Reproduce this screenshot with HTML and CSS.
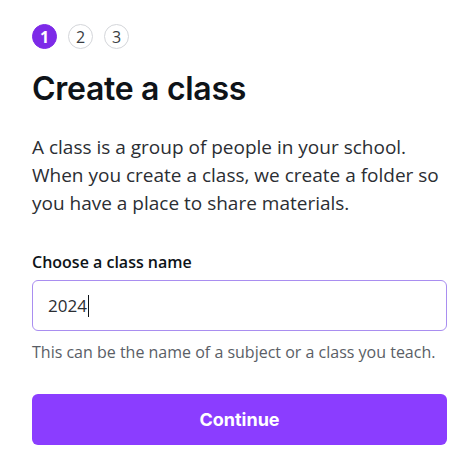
FILE: index.html
```html
<!DOCTYPE html>
<html lang="en">
<head>
<meta charset="utf-8">
<title>Create a class</title>
<link rel="stylesheet" href="styles.css">
</head>
<body>
<main class="panel">
  <ol class="steps">
    <li class="step step-active">1</li>
    <li class="step">2</li>
    <li class="step">3</li>
  </ol>
  <h1 class="title">Create a class</h1>
  <p class="intro">A class is a group of people in your school. When you create a class, we create a folder so you have a place to share materials.</p>
  <label class="field-label" for="classname">Choose a class name</label>
  <div class="input-box"><span class="input-value">2024</span><span class="caret"></span></div>
  <p class="hint">This can be the name of a subject or a class you teach.</p>
  <button class="continue" type="button">Continue</button>
</main>
</body>
</html>
```
FILE: styles.css
```css
* { box-sizing: border-box; }
html, body { margin: 0; background: #ffffff; }
body {
  font-family: "Open Sans", "Noto Sans", sans-serif;
  color: #0e1318;
}
.panel {
  padding: 24px 27px 0 32px;
  display: flex;
  flex-direction: column;
}
.steps {
  list-style: none;
  margin: 0;
  padding: 0;
  display: flex;
  gap: 11px;
}
.step {
  width: 25px;
  height: 25px;
  border-radius: 50%;
  border: 1.5px solid #d4d6da;
  display: flex;
  align-items: center;
  justify-content: center;
  font-size: 16px;
  color: #3a3d42;
}
.step-active {
  background: #7d2ae8;
  border-color: #7d2ae8;
  color: #fff;
  font-weight: 700;
}
.title {
  margin: 20px 0 0;
  font-family: "Inter", sans-serif;
  font-weight: 600;
  font-size: 32px;
  line-height: 40px;
  letter-spacing: -0.3px;
}
.intro {
  margin: 24px 0 0;
  font-size: 19px;
  line-height: 28px;
  color: #2b2e33;
}
.field-label {
  margin-top: 34px;
  font-size: 16px;
  font-weight: 600;
  line-height: 22px;
}
.input-box {
  margin-top: 7px;
  height: 51px;
  border: 1.5px solid #a98ef0;
  border-radius: 6px;
  display: flex;
  align-items: center;
  padding: 0 15px;
  font-size: 17px;
  color: #2b2e33;
}
.caret {
  width: 1.5px;
  height: 22px;
  background: #0e1318;
  margin-left: 1px;
}
.hint {
  margin: 10px 0 0;
  font-size: 16px;
  line-height: 22px;
  color: #5a5e66;
}
.continue {
  margin-top: 31px;
  height: 51px;
  border: none;
  border-radius: 6px;
  background: #8b3dff;
  color: #fff;
  font-family: "Inter", sans-serif;
  font-weight: 700;
  font-size: 18px;
}
```
